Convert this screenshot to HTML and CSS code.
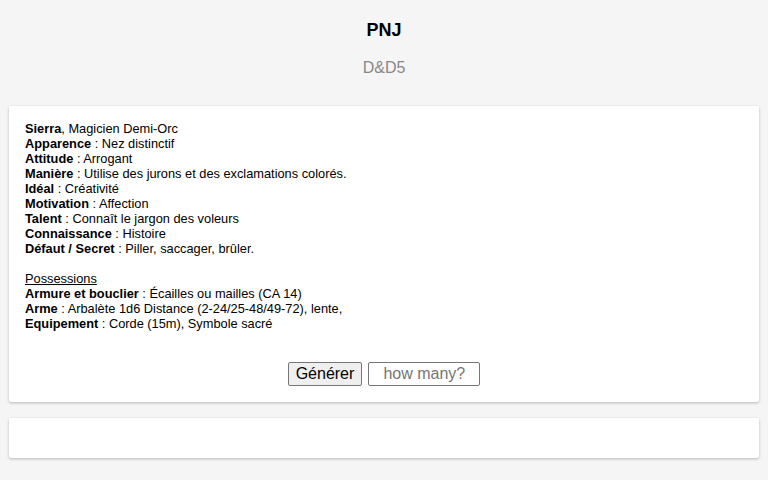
FILE: index.html
```html
<!DOCTYPE html>
<html lang="fr">
<head>
  <meta charset="UTF-8">
  <meta name="viewport" content="width=device-width, initial-scale=1.0">
  <title>PNJ</title>
  <link rel="stylesheet" href="styles.css">
</head>
<body>
  <header class="header">
    <h1>PNJ</h1>
    <p class="subtitle">D&amp;D5</p>
  </header>

  <div class="card">
    <div class="npc">
      <div><strong>Sierra</strong>, Magicien Demi-Orc</div>
      <div><strong>Apparence</strong> : Nez distinctif</div>
      <div><strong>Attitude</strong> : Arrogant</div>
      <div><strong>Manière</strong> : Utilise des jurons et des exclamations colorés.</div>
      <div><strong>Idéal</strong> : Créativité</div>
      <div><strong>Motivation</strong> : Affection</div>
      <div><strong>Talent</strong> : Connaît le jargon des voleurs</div>
      <div><strong>Connaissance</strong> : Histoire</div>
      <div><strong>Défaut / Secret</strong> : Piller, saccager, brûler.</div>
      <br>
      <div class="section">Possessions</div>
      <div><strong>Armure et bouclier</strong> : Écailles ou mailles (CA 14)</div>
      <div><strong>Arme</strong> : Arbalète 1d6 Distance (2-24/25-48/49-72), lente,</div>
      <div><strong>Equipement</strong> : Corde (15m), Symbole sacré</div>
    </div>

    <div class="controls">
      <button type="button" id="generate">Générer</button>
      <input type="text" id="count" placeholder="how many?">
    </div>
  </div>

  <div class="card card-empty"></div>
</body>
</html>
```

FILE: styles.css
```css
body {
  font-family: "Liberation Sans", Arial, sans-serif;
  background-color: #f5f5f5;
  margin: 0;
  padding: 0 9px;
  color: #000;
}
.header {
  text-align: center;
  padding-top: 20px;
  padding-bottom: 29px;
}
h1 {
  font-size: 18px;
  margin: 0;
  line-height: 21px;
}
.subtitle {
  color: #888;
  font-size: 16px;
  margin: 18px 0 0;
  line-height: 18px;
}
.card {
  background-color: white;
  box-shadow: 0 1px 3px rgba(0, 0, 0, 0.25);
  border-radius: 2px;
  padding: 15px 16px 16px;
  margin-bottom: 16px;
}
.npc {
  font-size: 12.8px;
  line-height: 15px;
}
.npc br {
  display: block;
  content: "";
  height: 15px;
}
.section {
  text-decoration: underline;
}
.controls {
  display: flex;
  justify-content: center;
  gap: 6px;
  margin-top: 31px;
}
button {
  font-family: "Liberation Sans", Arial, sans-serif;
  font-size: 16px;
  background-color: #efefef;
  border: 1px solid #767676;
  border-radius: 2px;
  padding: 1px 7px;
  height: 24px;
  color: #000;
}
input[type="text"] {
  font-family: "Liberation Sans", Arial, sans-serif;
  font-size: 16px;
  width: 112px;
  height: 24px;
  box-sizing: border-box;
  border: 1px solid #767676;
  border-radius: 2px;
  text-align: center;
  padding: 1px 2px;
}
input::placeholder {
  color: #757575;
}
.card-empty {
  height: 40px;
  padding: 0;
}
```
